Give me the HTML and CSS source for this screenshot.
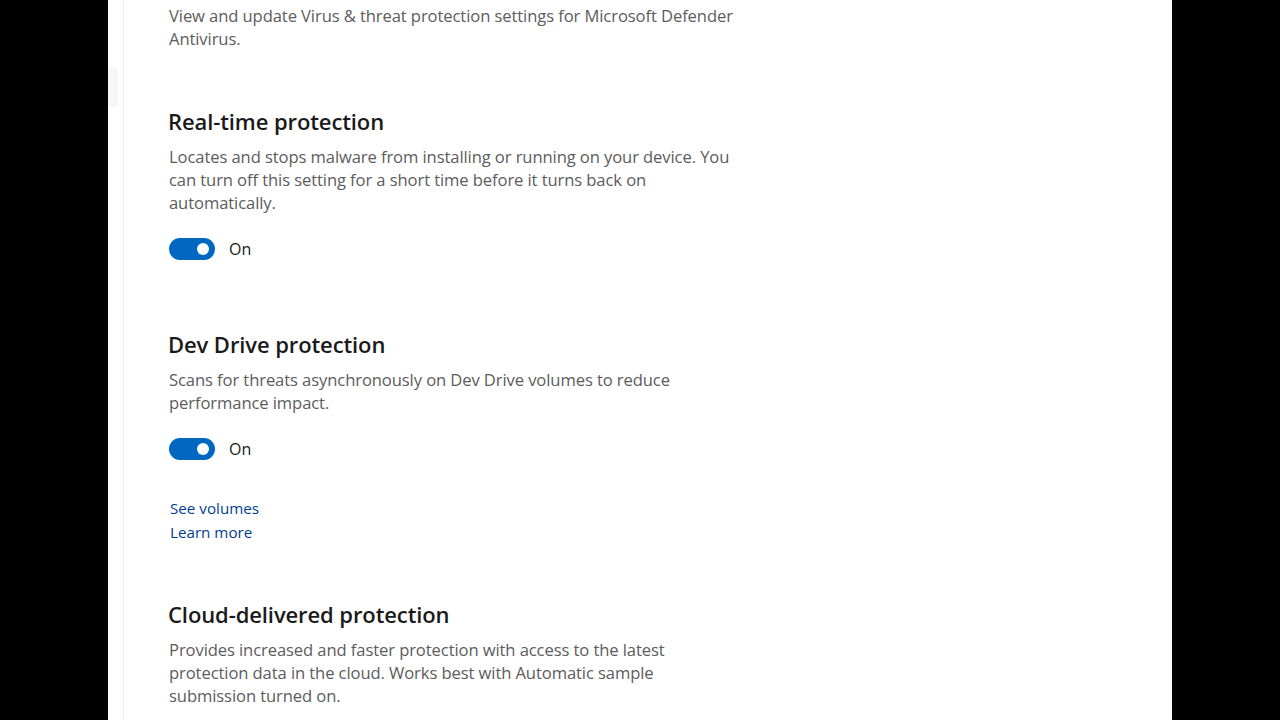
FILE: index.html
```html
<!DOCTYPE html>
<html>
<head>
<meta charset="utf-8">
<link rel="stylesheet" href="styles.css">
</head>
<body>
<div class="frame">
  <div class="bar"></div>
  <div class="page">
    <div class="rail"><div class="rail-tab"></div></div>
    <div class="content">
      <p class="desc top">View and update Virus &amp; threat protection settings for Microsoft Defender Antivirus.</p>

      <section class="sec first">
        <h2>Real-time protection</h2>
        <p class="desc">Locates and stops malware from installing or running on your device. You can turn off this setting for a short time before it turns back on automatically.</p>
        <div class="toggle-row"><span class="toggle"><span class="knob"></span></span><span class="state">On</span></div>
      </section>

      <section class="sec second">
        <h2>Dev Drive protection</h2>
        <p class="desc">Scans for threats asynchronously on Dev Drive volumes to reduce performance impact.</p>
        <div class="toggle-row"><span class="toggle"><span class="knob"></span></span><span class="state">On</span></div>
        <div class="links">
          <a href="#">See volumes</a>
          <a href="#">Learn more</a>
        </div>
      </section>

      <section class="sec third">
        <h2>Cloud-delivered protection</h2>
        <p class="desc">Provides increased and faster protection with access to the latest protection data in the cloud. Works best with Automatic sample submission turned on.</p>
      </section>
    </div>
  </div>
  <div class="bar"></div>
</div>
</body>
</html>
```

FILE: styles.css
```css
html, body {
  margin: 0;
  padding: 0;
  background: #000;
  overflow: hidden;
}
.frame {
  display: flex;
  width: 1280px;
  height: 720px;
}
.bar {
  width: 108px;
  background: #000;
  flex: none;
}
.page {
  flex: 1;
  background: #fff;
  display: flex;
  font-family: "Open Sans", "Noto Sans", sans-serif;
}
.rail {
  width: 15px;
  border-right: 1px solid #f0f0f0;
  flex: none;
  padding-top: 67px;
}
.rail-tab {
  width: 10px;
  height: 40px;
  background: #f7f7f7;
  border-radius: 0 4px 4px 0;
}
.content {
  padding-left: 45px;
  width: 570px;
}
.desc {
  margin: 0;
  font-size: 16.6px;
  line-height: 23px;
  color: #5c5c5c;
  letter-spacing: -0.1px;
}
.top {
  margin-top: 4px;
}
h2 {
  margin: 0;
  font-size: 22px;
  font-weight: 600;
  line-height: 28px;
  color: #1a1a1a;
  letter-spacing: -0.1px;
  margin-left: -1px;
}
.sec.first { margin-top: 57px; }
.sec.second { margin-top: 69px; }
.sec.third { margin-top: 56px; }
.sec h2 + .desc { margin-top: 10px; }
.toggle-row {
  display: flex;
  align-items: center;
  gap: 14px;
  margin-top: 23px;
  height: 24px;
}
.toggle {
  width: 46px;
  height: 22px;
  border-radius: 11px;
  background: #0067c0;
  position: relative;
  flex: none;
}
.knob {
  position: absolute;
  width: 12px;
  height: 12px;
  border-radius: 50%;
  background: #fff;
  right: 6px;
  top: 5px;
}
.state {
  font-size: 16px;
  color: #1a1a1a;
}
.links {
  margin-top: 35px;
  display: flex;
  flex-direction: column;
}
.links a {
  font-size: 15.2px;
  line-height: 24px;
  color: #003e92;
  text-decoration: none;
  margin-left: 1px;
}
```
